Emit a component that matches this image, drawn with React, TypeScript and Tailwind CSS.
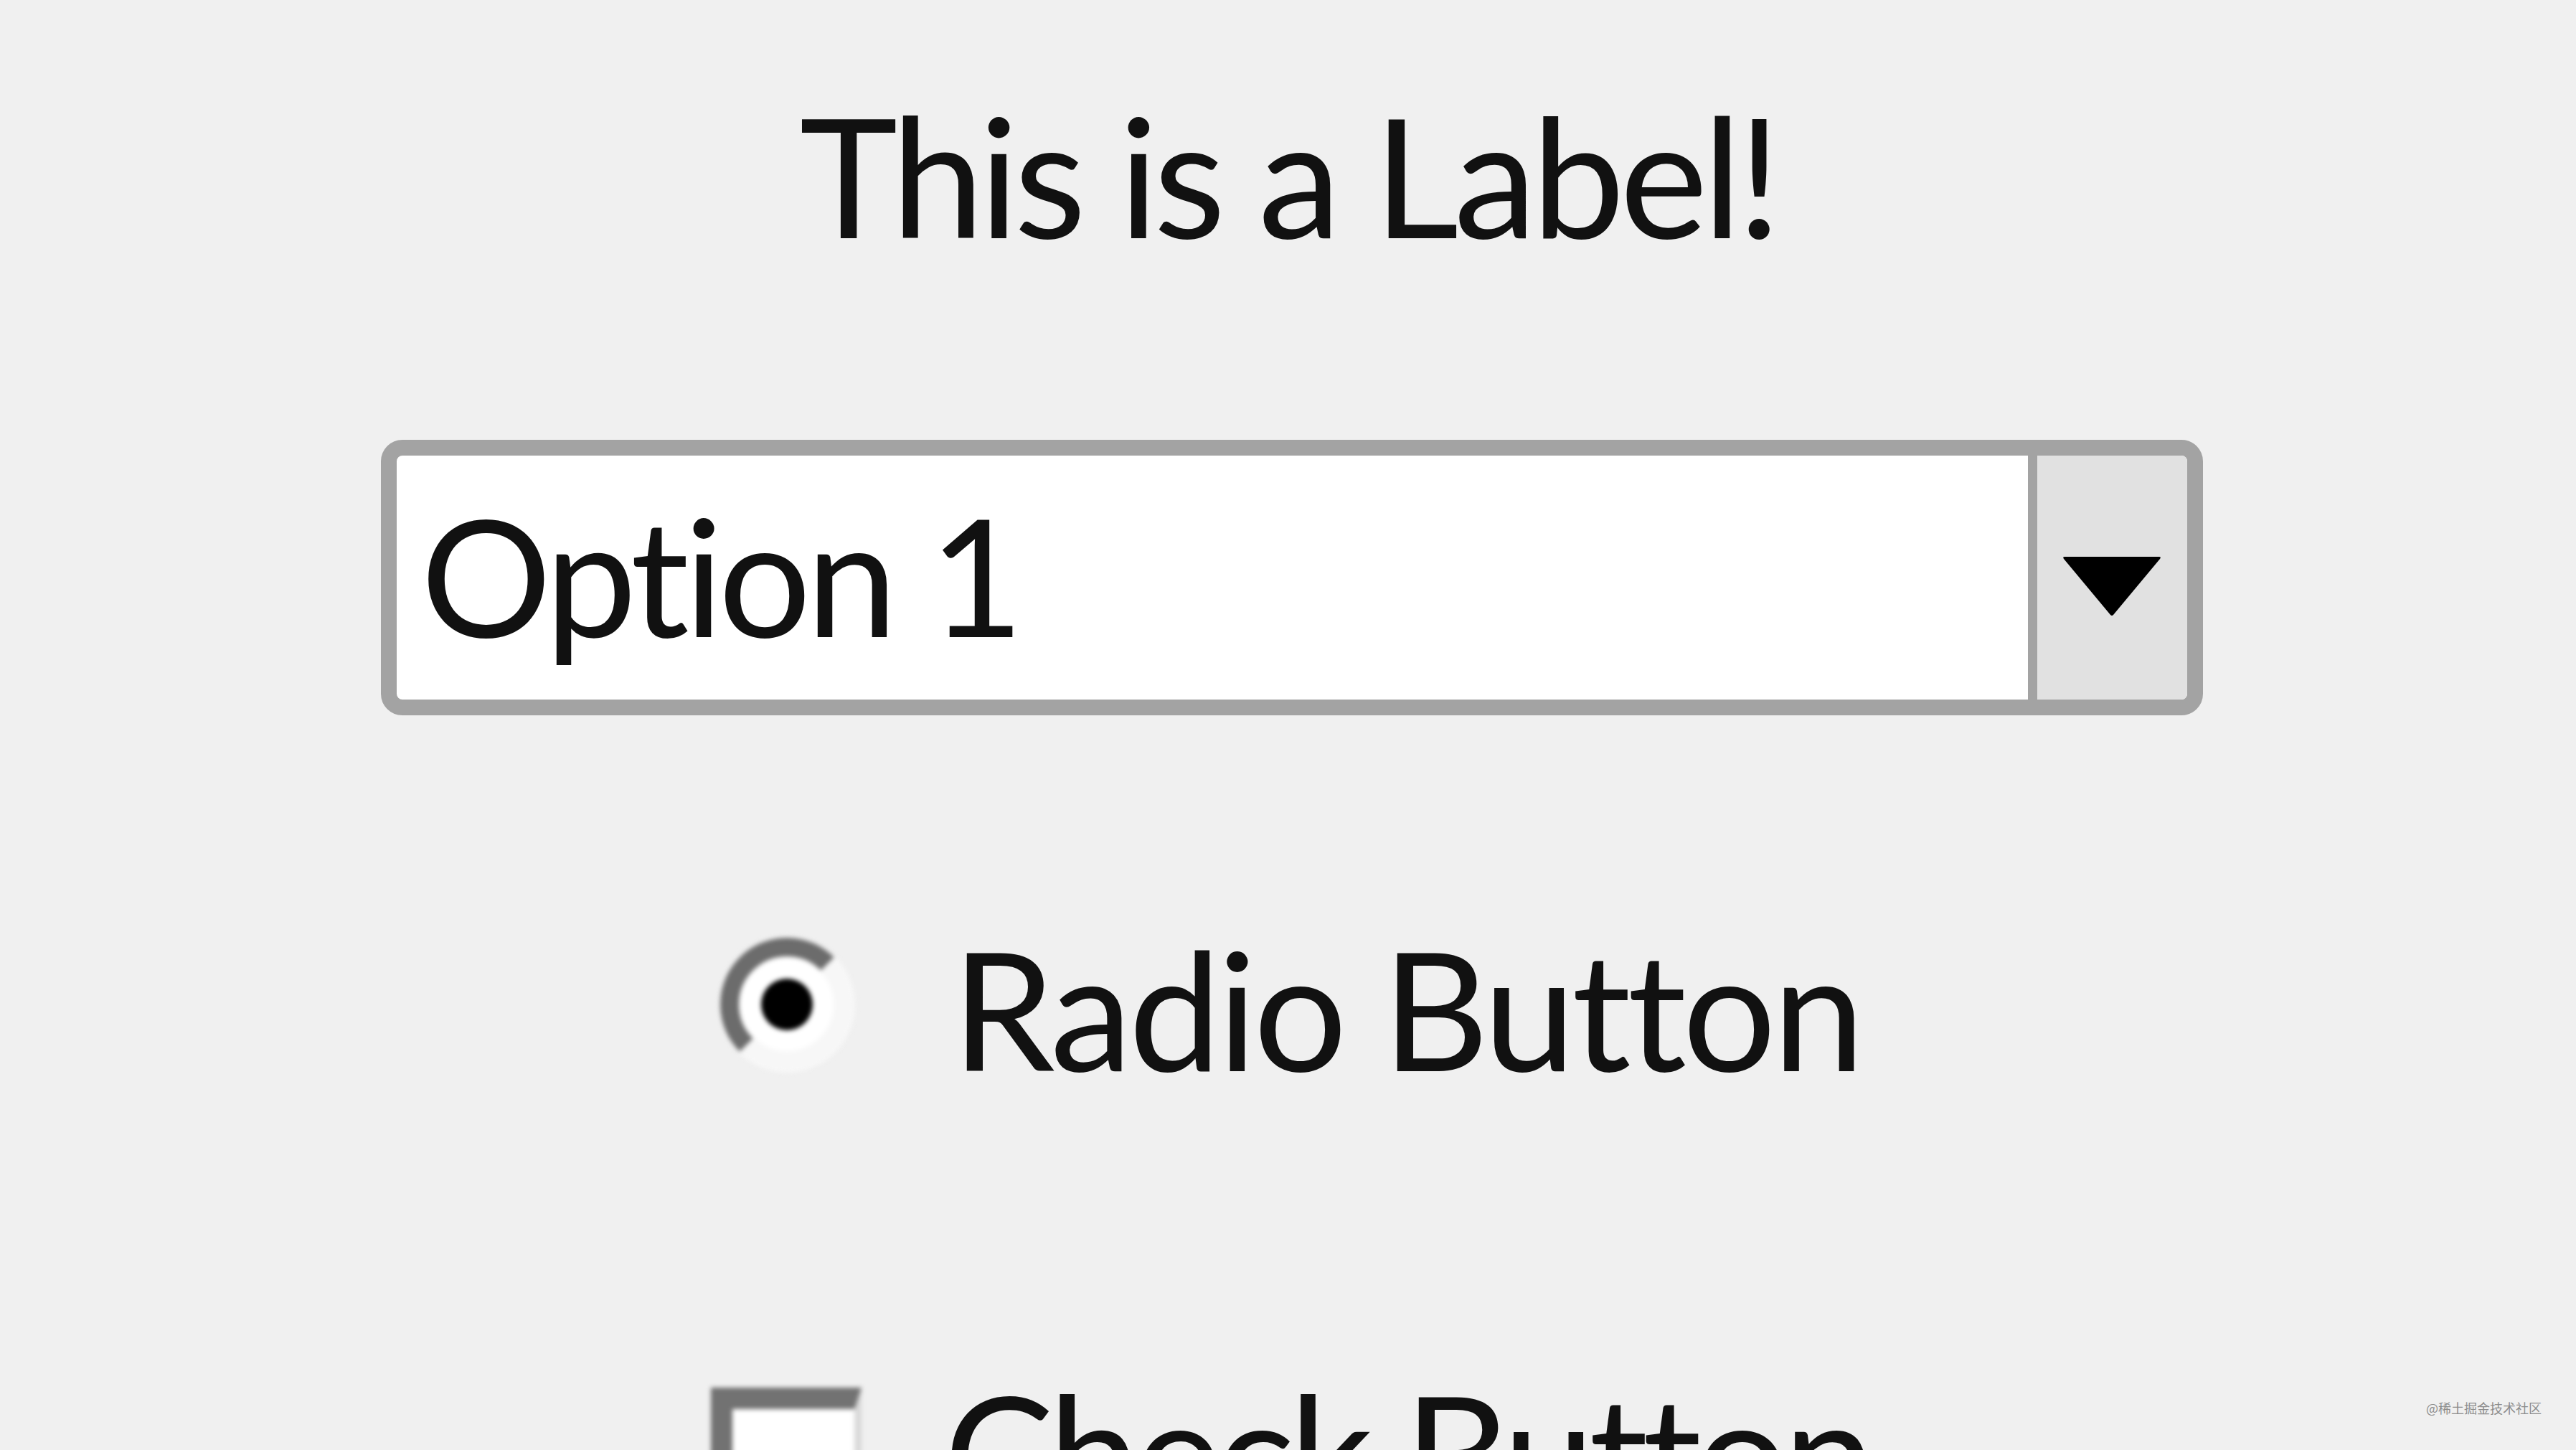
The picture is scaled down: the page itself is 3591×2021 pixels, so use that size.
export default function App() {
  return (
    <div className="relative h-[2021px] w-full overflow-hidden bg-[#f0f0f0] font-['Lato',sans-serif] text-[#111] [font-variant-ligatures:none]">
      <div className="flex flex-col items-center">
        <p className="pt-[126px] text-[232px] leading-none tracking-[-7px]">This is a Label!</p>

        {/* combobox */}
        <div className="ml-[10px] mt-[255px] flex h-[384px] w-[2540px] overflow-hidden rounded-[30px] border-[22px] border-[#a3a3a3] bg-white">
          <div className="flex-1 pl-[34px] pt-[51px] text-[228px] leading-none tracking-[-7px]">Option 1</div>
          <div className="flex w-[222px] items-center justify-center border-l-[13px] border-[#a3a3a3] bg-[#e1e1e1] pt-[24px]">
            <svg width="140" height="86" viewBox="0 0 140 86">
              <path d="M4 2H136Q139 2 137 5L72 83Q70 85 68 83L3 5Q1 2 4 2Z" fill="#000" />
            </svg>
          </div>
        </div>

        {/* radio */}
        <div className="mt-[292px] flex items-start gap-[130px]">
          <svg className="mt-[11px] blur-[3px]" width="200" height="200" viewBox="0 0 200 200">
            <circle cx="100" cy="100" r="80" fill="#fff" stroke="#f7f7f7" strokeWidth="30" />
            <path d="M43.4 156.6A80 80 0 0 1 156.6 43.4" fill="none" stroke="#6c6c6c" strokeWidth="26" />
            <circle cx="100" cy="100" r="36" fill="#000" />
          </svg>
          <span className="text-[230px] leading-none tracking-[-5px]">Radio Button</span>
        </div>

        {/* checkbox */}
        <div className="ml-[6px] mt-[389px] flex items-start gap-[115px]">
          <div className="mt-[26px] h-[210px] w-[210px] border-b-[10px] border-l-[30px] border-r-[10px] border-t-[30px] border-b-[#d8d8d8] border-l-[#727272] border-r-[#d8d8d8] border-t-[#727272] bg-white blur-[3px]" />
          <span className="text-[230px] leading-none tracking-[-8px]">Check Button</span>
        </div>
      </div>

      <span className="absolute bottom-[45px] right-[48px] font-['Noto_Sans_CJK_SC',sans-serif] text-[18px] text-[#8c8c8c]">
        @稀土掘金技术社区
      </span>
    </div>
  );
}
